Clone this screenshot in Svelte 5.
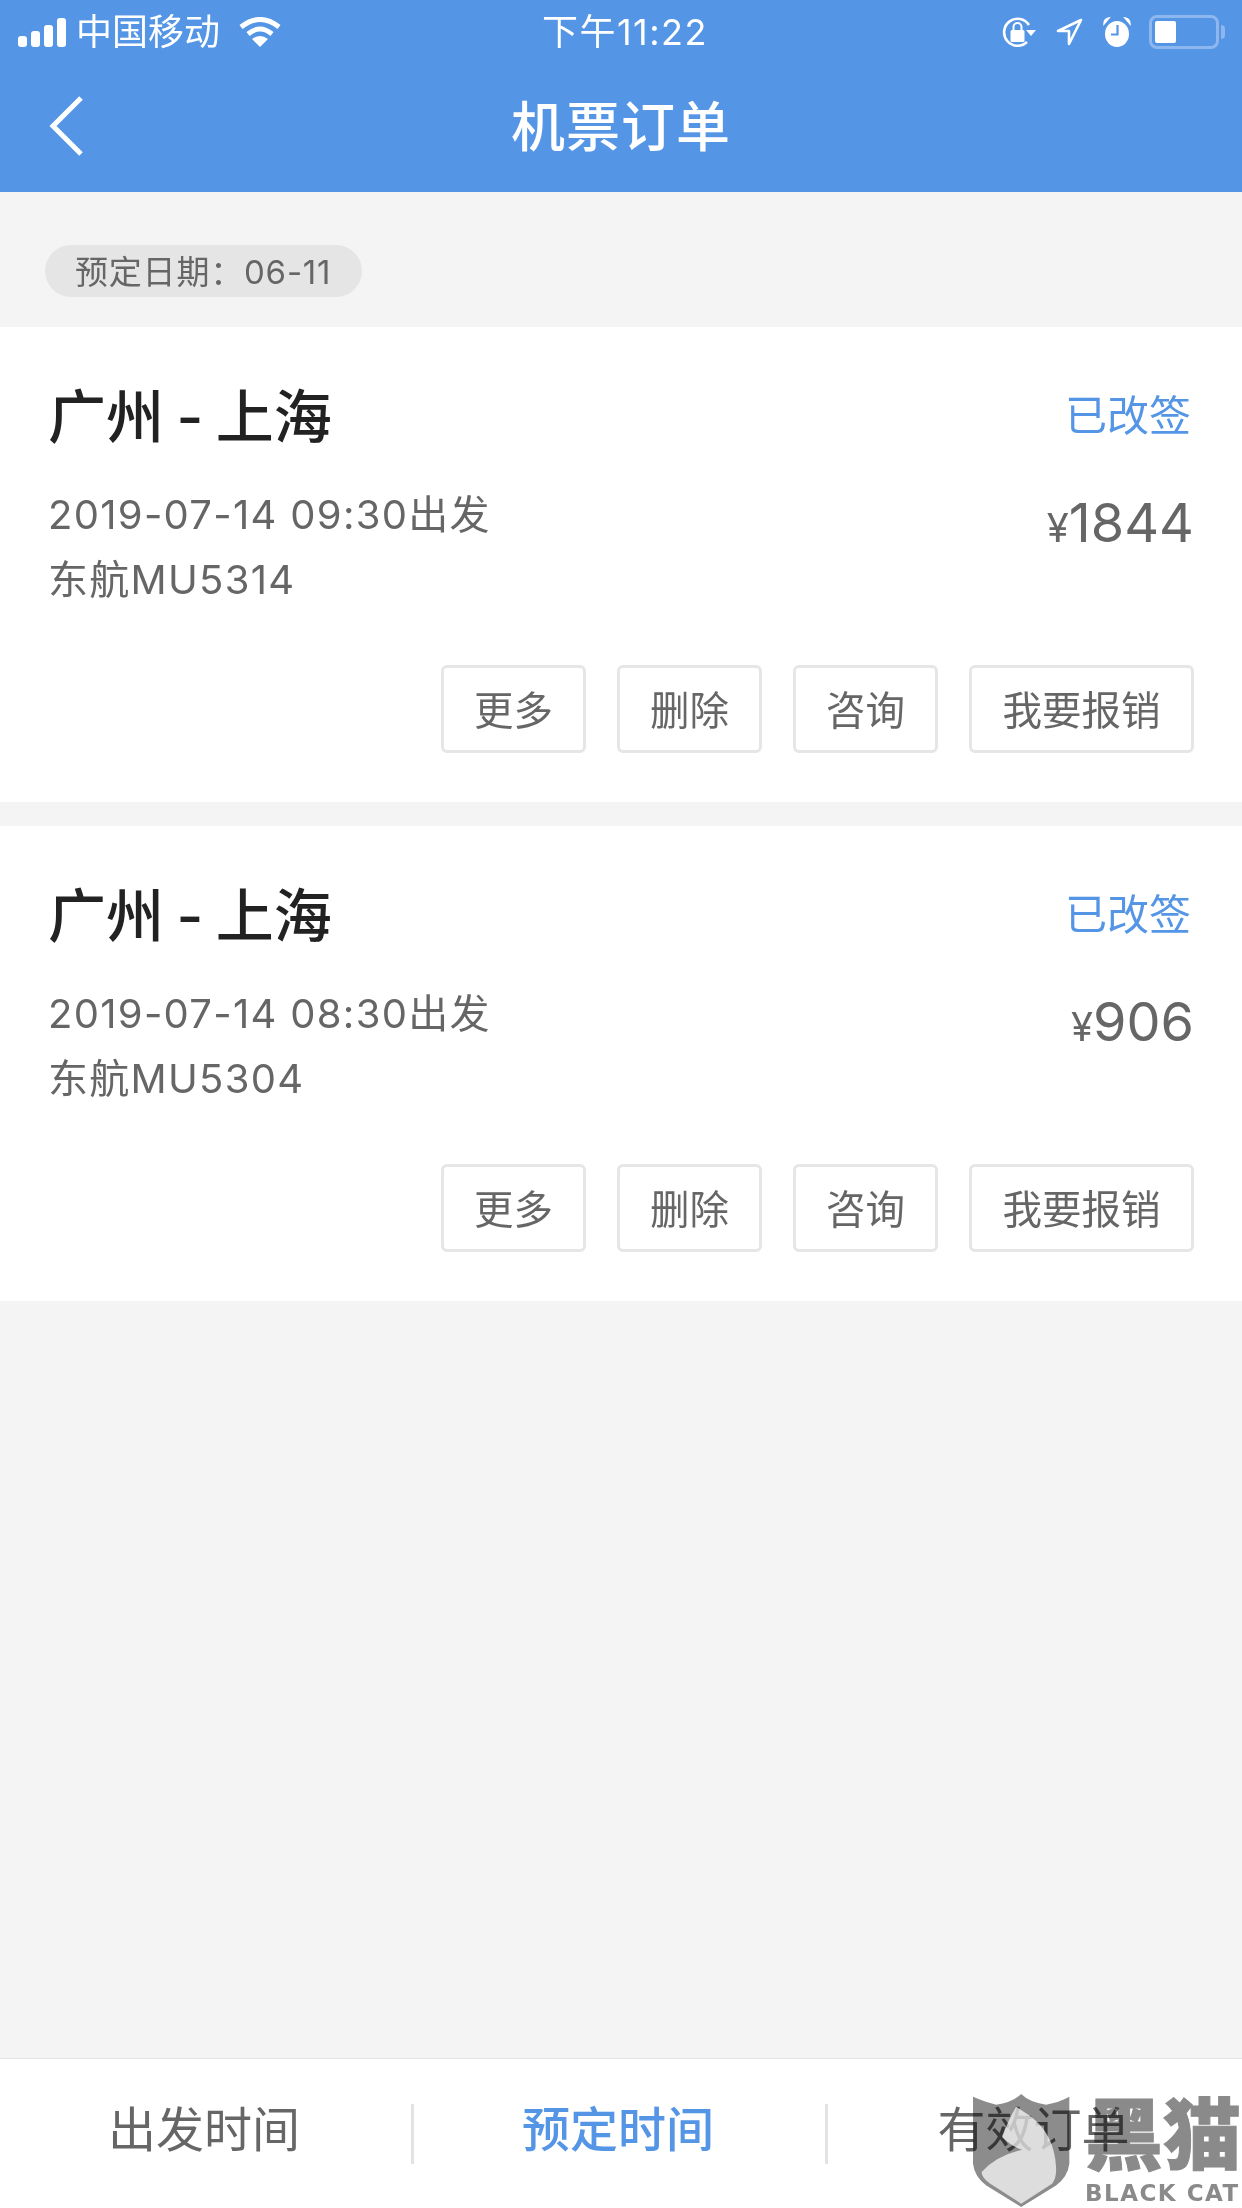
<script>
	const orders = [
		{ date: '2019-07-14 09:30出发', flight: '东航MU5314', price: '1844' },
		{ date: '2019-07-14 08:30出发', flight: '东航MU5304', price: '906' }
	];
	const actions = ['更多', '删除', '咨询', '我要报销'];
	const tabs = ['出发时间', '预定时间', '有效订单'];
	const bars = [
		{ x: 0, y: 18, h: 11 },
		{ x: 13, y: 13, h: 16 },
		{ x: 26, y: 7, h: 22 },
		{ x: 39, y: 0, h: 29 }
	];
</script>

<div class="page">
	<header class="top">
		<div class="status">
			<div class="status-left">
				<svg width="48" height="29" viewBox="0 0 48 29" fill="#fff">
					{#each bars as b}
						<rect x={b.x} y={b.y} width="9" height={b.h} rx="3" />
					{/each}
				</svg>
				<span class="carrier">中国移动</span>
				<svg class="wifi" width="42" height="30" viewBox="0 0 42 30">
					<path d="M2 10 Q21 -5 40 10" fill="none" stroke="#fff" stroke-width="5" />
					<path d="M9 17 Q21 7 33 17" fill="none" stroke="#fff" stroke-width="5" />
					<path d="M21 30 L13 22 Q21 16 29 22 Z" fill="#fff" />
				</svg>
			</div>
			<span class="clock">下午11:22</span>
			<div class="status-right">
				<svg width="34" height="30" viewBox="0 0 34 30">
					<path d="M27 8 A13.5 13.5 0 1 0 25 25" fill="none" stroke="#fff" stroke-width="2.6" />
					<path d="M24 13 H34 L29 19 Z" fill="#fff" />
					<rect x="8.5" y="13" width="14" height="12" rx="1.5" fill="#fff" />
					<path d="M11.5 13 V10 A4 4 0 0 1 19.5 10 V13" fill="none" stroke="#fff" stroke-width="2" />
				</svg>
				<svg width="27" height="28" viewBox="0 0 27 28">
					<path d="M25 2 L2 13 H13 V26 Z" fill="none" stroke="#fff" stroke-width="2.6" stroke-linejoin="round" />
				</svg>
				<svg width="28" height="30" viewBox="0 0 28 30">
					<ellipse cx="14" cy="17" rx="12" ry="13" fill="#fff" />
					<path d="M1 7 Q1 2 6 1 Z M27 7 Q27 2 22 1 Z" fill="#fff" stroke="#fff" stroke-width="1.5" />
					<path d="M14.5 8 V17.5 H8" fill="none" stroke="#5495e6" stroke-width="2.2" />
				</svg>
				<div class="battery">
					<div class="battery-body"><div class="battery-fill"></div></div>
					<div class="battery-nub"></div>
				</div>
			</div>
		</div>
		<div class="nav">
			<svg class="back" width="36" height="62" viewBox="0 0 36 62">
				<path d="M33 3 L5 31 L33 59" fill="none" stroke="#fff" stroke-width="5" />
			</svg>
			<h1>机票订单</h1>
		</div>
	</header>

	<main class="list">
		<div class="date-row"><span class="date-pill">预定日期：06-11</span></div>
		{#each orders as o}
			<section class="card">
				<div class="row">
					<h2>广州 - 上海</h2>
					<span class="state">已改签</span>
				</div>
				<div class="row info">
					<div class="meta">
						<div>{o.date}</div>
						<div>{o.flight}</div>
					</div>
					<div class="price"><small>¥</small>{o.price}</div>
				</div>
				<div class="actions">
					{#each actions as a}
						<button>{a}</button>
					{/each}
				</div>
			</section>
		{/each}
	</main>

	<footer class="tabs">
		{#each tabs as t, i}
			<div class="tab" class:active={i === 1}>{t}</div>
		{/each}
	</footer>

	<div class="watermark">
		<svg class="shield" width="98" height="117" viewBox="520 155 295 350">
			<path class="shield-grey" d="M520 168 Q560 185 590 192 Q640 185 665 160 Q690 185 740 192 Q780 185 810 168 L810 370 Q805 410 770 435 L665 500 L560 435 Q525 410 520 370 Z" />
			<path class="shield-white" d="M650 198 Q625 240 608 290 Q640 320 668 328 Q590 345 546 395 Q545 410 572 430 L665 490 L758 430 Q772 412 770 380 Q765 280 690 225 Z" />
		</svg>
		<div class="mark-text">
			<div class="mark-cn">黑猫</div>
			<div class="mark-en">BLACK CAT</div>
		</div>
	</div>
</div>

<style>
	:global(body) {
		margin: 0;
	}
	.page {
		position: relative;
		width: 1242px;
		height: 2208px;
		display: flex;
		flex-direction: column;
		overflow: hidden;
		background: #f4f4f4;
		font-family: Inter, "Noto Sans CJK SC", sans-serif;
	}
	.top {
		height: 192px;
		background: #5495e6;
		color: #fff;
		flex: none;
	}
	.status {
		height: 62px;
		padding: 0 15px 0 18px;
		display: grid;
		grid-template-columns: 1fr auto 1fr;
		align-items: center;
	}
	.status-left {
		display: flex;
		align-items: center;
	}
	.carrier {
		font-size: 36px;
		margin-left: 10px;
		line-height: 64px;
	}
	.wifi {
		margin-left: 19px;
	}
	.clock {
		font-size: 36px;
		line-height: 58px;
		letter-spacing: 1.5px;
		margin-left: 5px;
	}
	.status-right {
		display: flex;
		align-items: center;
		justify-content: flex-end;
		gap: 20px;
	}
	.battery {
		display: flex;
		align-items: center;
		gap: 2px;
		margin: 0 2px 0 -2px;
	}
	.battery-body {
		width: 70px;
		height: 34px;
		box-sizing: border-box;
		border: 3px solid #8db7ee;
		border-radius: 8px;
		padding: 3px;
	}
	.battery-fill {
		width: 21px;
		height: 100%;
		background: #fff;
		border-radius: 2px;
	}
	.battery-nub {
		width: 4px;
		height: 14px;
		background: #8db7ee;
		border-radius: 0 4px 4px 0;
	}
	.nav {
		position: relative;
		height: 130px;
		display: flex;
		align-items: center;
		justify-content: center;
	}
	.back {
		position: absolute;
		left: 48px;
		top: 33px;
	}
	h1 {
		margin: 0 0 8px;
		font-size: 54px;
		font-weight: 500;
		letter-spacing: 1px;
	}
	.list {
		flex: 1;
	}
	.date-row {
		height: 135px;
		box-sizing: border-box;
		padding: 53px 0 0 45px;
	}
	.date-pill {
		display: inline-block;
		height: 52px;
		line-height: 54px;
		padding: 0 31px 0 30px;
		border-radius: 26px;
		background: #e5e5e5;
		color: #666;
		font-size: 33px;
		letter-spacing: 0.8px;
	}
	.card {
		background: #fff;
		height: 475px;
		box-sizing: border-box;
		padding: 48px 48px 0;
		margin-bottom: 24px;
	}
	.row {
		display: flex;
		justify-content: space-between;
		align-items: flex-start;
		height: 80px;
	}
	h2 {
		margin: 0;
		font-size: 58px;
		line-height: 84px;
		font-weight: 500;
		word-spacing: -3px;
		color: #222;
	}
	.state {
		font-size: 42px;
		line-height: 82px;
		margin-right: 3px;
		color: #5495e6;
	}
	.info {
		margin-top: 27px;
		height: 130px;
	}
	.meta {
		font-size: 40px;
		line-height: 65px;
		letter-spacing: 1.3px;
		color: #666;
	}
	.price {
		font-size: 54px;
		line-height: 82px;
		color: #666;
	}
	.price small {
		font-size: 40px;
	}
	.actions {
		margin-top: 53px;
		display: flex;
		justify-content: flex-end;
		gap: 31px;
	}
	button {
		width: 145px;
		height: 88px;
		padding: 0 0 4px;
		box-sizing: border-box;
		background: #fff;
		border: 3px solid #e6e6e6;
		border-radius: 6px;
		color: #666;
		font-family: inherit;
		font-size: 39.5px;
	}
	button:last-child {
		width: 225px;
	}
	.tabs {
		flex: none;
		height: 150px;
		box-sizing: border-box;
		border-top: 1px solid #e3e3e3;
		background: #fff;
		display: grid;
		grid-template-columns: 411px 414px 1fr;
		align-items: center;
	}
	.tab {
		height: 60px;
		line-height: 52px;
		text-align: center;
		font-size: 48px;
		color: #666;
		border-left: 3px solid #e3e3e3;
		padding-right: 3px;
	}
	.tab:first-child {
		border-left: 0;
	}
	.tab.active {
		color: #5495e6;
		font-weight: 500;
	}
	.watermark {
		position: absolute;
		left: 973px;
		top: 2092px;
		display: flex;
		gap: 14px;
		pointer-events: none;
	}
	.shield-grey {
		fill: #8c8c8c;
		mix-blend-mode: multiply;
	}
	.shield-white {
		fill: #fff;
		opacity: 0.7;
	}
	.mark-text {
		color: #8a8a8a;
		mix-blend-mode: multiply;
	}
	.mark-cn {
		font-size: 78px;
		line-height: 88px;
		font-weight: 900;
		-webkit-text-stroke: 1px #8a8a8a;
		white-space: nowrap;
	}
	.mark-en {
		font-family: "DejaVu Sans", sans-serif;
		font-size: 23px;
		line-height: 24px;
		font-weight: 700;
		letter-spacing: 1.5px;
		margin-top: 1px;
		white-space: nowrap;
	}
</style>
